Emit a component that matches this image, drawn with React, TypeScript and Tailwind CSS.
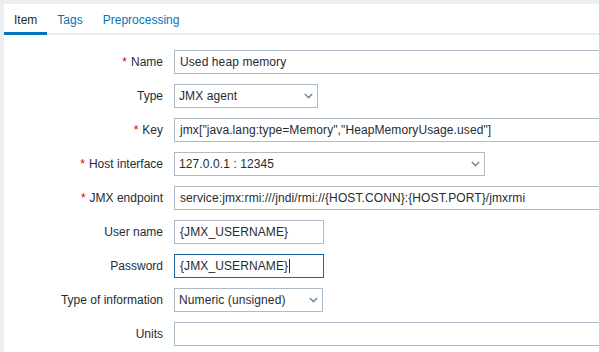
import React from "react";

const Chevron = () => (
  <svg width="9" height="6" viewBox="0 0 9 6" className="absolute right-[4px] top-[8px]">
    <path d="M0.8 1 L4.5 4.6 L8.2 1" fill="none" stroke="#768d99" strokeWidth="1.5" />
  </svg>
);

const Label = ({ text, required }: { text: string; required?: boolean }) => (
  <div className="w-[160px] shrink-0 text-right pr-[1px]">
    {required && <span className="text-[#d40000] mr-[4px]">*</span>}
    {text}
  </div>
);

const TextBox = ({ value, width, focused }: { value: string; width: string; focused?: boolean }) => (
  <div
    className={`h-6 ${width} shrink-0 border bg-white pl-[5px] flex items-center whitespace-nowrap overflow-hidden tracking-[0.1px] ${
      focused ? "border-[#1a64a4]" : "border-[#acbbc7]"
    }`}
  >
    {value}
    {focused && <span className="inline-block w-px h-[14px] bg-[#1f2c33] ml-[1px]" />}
  </div>
);

const SelectBox = ({ value, width }: { value: string; width: string }) => (
  <div className={`relative h-6 ${width} shrink-0 border border-[#acbbc7] bg-white pl-[4px] flex items-center whitespace-nowrap tracking-[0.1px]`}>
    {value}
    <Chevron />
  </div>
);

const Row = ({ children }: { children: React.ReactNode }) => (
  <div className="flex items-center gap-[10px] h-6">{children}</div>
);

export default function App() {
  return (
    <div className="w-[599px] h-[352px] overflow-hidden bg-[#ebeef0] pt-[4px] pl-[4px] text-[12px] text-[#1f2c33] font-['Liberation_Sans',Arial,sans-serif]">
      <div className="bg-white h-full">
        <div className="flex h-[31px] border-b-[2px] border-[#ebeef0]">
          <div className="px-[10px] pt-[7px] border-b-[3px] border-[#0275b8] -mb-[2px]">Item</div>
          <div className="px-[10px] pt-[7px] text-[#0275b8]">Tags</div>
          <div className="px-[10px] pt-[7px] text-[#0275b8]">Preprocessing</div>
        </div>
        <div className="flex flex-col gap-[10px] pt-[15px]">
          <Row>
            <Label text="Name" required />
            <TextBox value="Used heap memory" width="w-[453px]" />
          </Row>
          <Row>
            <Label text="Type" />
            <SelectBox value="JMX agent" width="w-[144px]" />
          </Row>
          <Row>
            <Label text="Key" required />
            <TextBox value={'jmx["java.lang:type=Memory","HeapMemoryUsage.used"]'} width="w-[453px]" />
          </Row>
          <Row>
            <Label text="Host interface" required />
            <SelectBox value="127.0.0.1 : 12345" width="w-[311px]" />
          </Row>
          <Row>
            <Label text="JMX endpoint" required />
            <TextBox value="service:jmx:rmi:///jndi/rmi://{HOST.CONN}:{HOST.PORT}/jmxrmi" width="w-[453px]" />
          </Row>
          <Row>
            <Label text="User name" />
            <TextBox value="{JMX_USERNAME}" width="w-[150px]" />
          </Row>
          <Row>
            <Label text="Password" />
            <TextBox value="{JMX_USERNAME}" width="w-[150px]" focused />
          </Row>
          <Row>
            <Label text="Type of information" />
            <SelectBox value="Numeric (unsigned)" width="w-[149px]" />
          </Row>
          <Row>
            <Label text="Units" />
            <TextBox value="" width="w-[453px]" />
          </Row>
        </div>
      </div>
    </div>
  );
}
